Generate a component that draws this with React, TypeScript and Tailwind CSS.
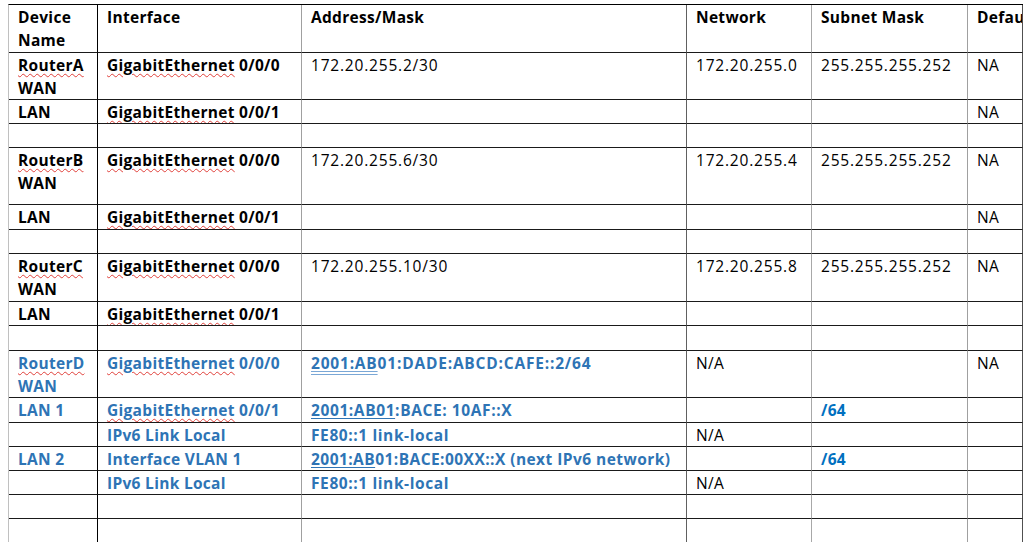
import React from 'react';

type Cell = React.ReactNode;
type Row = { h: string; cells: Cell[] };

const squig = 'underline decoration-wavy decoration-[#e0403a] decoration-1 underline-offset-[2px]';
const blue = 'text-[#2e74b5]';
const num = 'tracking-[0.8px]';
const addr = `${blue} font-bold tracking-[0.6px]`;

function Gig({ port }: { port: string }) {
    return (
        <span className="font-bold">
            <span className={squig}>GigabitEthernet</span> {port}
        </span>
    );
}

function Router({ name }: { name: string }) {
    return (
        <span className="font-bold">
            <span className={squig}>{name}</span>
            <br />
            WAN
        </span>
    );
}

const N = ({ t }: { t: string }) => <span className={num}>{t}</span>;

const blank = ['', '', '', '', '', ''];

const rows: Row[] = [
    {
        h: 'h-[48px]',
        cells: [
            <span className="font-bold">Device Name</span>,
            <span className="font-bold">Interface</span>,
            <span className="font-bold">Address/Mask</span>,
            <span className="font-bold">Network</span>,
            <span className="font-bold">Subnet Mask</span>,
            <span className="font-bold whitespace-nowrap">Default Gateway</span>,
        ],
    },
    { h: 'h-[47px]', cells: [<Router name="RouterA" />, <Gig port="0/0/0" />, <N t="172.20.255.2/30" />, <N t="172.20.255.0" />, <N t="255.255.255.252" />, 'NA'] },
    { h: 'h-[24px]', cells: [<span className="font-bold">LAN</span>, <Gig port="0/0/1" />, '', '', '', 'NA'] },
    { h: 'h-[24px]', cells: blank },
    { h: 'h-[57px]', cells: [<Router name="RouterB" />, <Gig port="0/0/0" />, <N t="172.20.255.6/30" />, <N t="172.20.255.4" />, <N t="255.255.255.252" />, 'NA'] },
    { h: 'h-[25px]', cells: [<span className="font-bold">LAN</span>, <Gig port="0/0/1" />, '', '', '', 'NA'] },
    { h: 'h-[24px]', cells: blank },
    { h: 'h-[48px]', cells: [<Router name="RouterC" />, <Gig port="0/0/0" />, <N t="172.20.255.10/30" />, <N t="172.20.255.8" />, <N t="255.255.255.252" />, 'NA'] },
    { h: 'h-[24px]', cells: [<span className="font-bold">LAN</span>, <Gig port="0/0/1" />, '', '', '', ''] },
    { h: 'h-[25px]', cells: blank },
    {
        h: 'h-[47px]',
        cells: [
            <span className={blue}><Router name="RouterD" /></span>,
            <span className={blue}><Gig port="0/0/0" /></span>,
            <span className={`${blue} font-bold tracking-[0.8px]`}>
                <span className="underline decoration-double decoration-[#7aa7d6] underline-offset-[2px]">2001:AB</span>01:DADE:ABCD:CAFE::2/64
            </span>,
            'N/A',
            '',
            'NA',
        ],
    },
    {
        h: 'h-[25px]',
        cells: [
            <span className={`${blue} font-bold`}>LAN 1</span>,
            <span className={blue}><Gig port="0/0/1" /></span>,
            <span className={addr}>
                <span className="underline decoration-[#2e74b5] underline-offset-[2px]">2001:AB01</span>:BACE: 10AF::X
            </span>,
            '',
            <span className="font-bold text-[#0070c0]">/64</span>,
            '',
        ],
    },
    {
        h: 'h-[24px]',
        cells: ['', <span className={`${blue} font-bold`}>IPv6 Link Local</span>, <span className={addr}>FE80::1 link-local</span>, 'N/A', '', ''],
    },
    {
        h: 'h-[24px]',
        cells: [
            <span className={`${blue} font-bold`}>LAN 2</span>,
            <span className={`${blue} font-bold`}>Interface VLAN 1</span>,
            <span className={`${blue} font-bold tracking-[0.45px]`}>
                <span className="underline decoration-[#2e74b5] underline-offset-[2px]">2001:AB</span>01:BACE:00XX::X (next IPv6 network)
            </span>,
            '',
            <span className="font-bold text-[#0070c0]">/64</span>,
            '',
        ],
    },
    {
        h: 'h-[24px]',
        cells: ['', <span className={`${blue} font-bold`}>IPv6 Link Local</span>, <span className={addr}>FE80::1 link-local</span>, 'N/A', '', ''],
    },
    { h: 'h-[24px]', cells: blank },
    { h: 'h-[25px]', cells: blank },
    { h: 'h-[30px]', cells: blank },
];

// colour of each column's right rule, as the screenshot shows it
const rules = [
    'border-r-[#000]',
    'border-r-[#a0a0a0]',
    'border-r-[#606060]',
    'border-r-[#a8a8a8]',
    'border-r-[#a0a0a0]',
    'border-r-[#505050]',
];

export default function App() {
    return (
        <div className="w-[1024px] h-[542px] overflow-hidden bg-white pt-1 pl-2 font-['Open_Sans','Liberation_Sans',sans-serif] text-[15.5px] leading-[23px] tracking-[0.3px] text-black">
            <div className="w-[1015px] border-l border-t border-l-[#c0c0c0] border-t-black">
                {rows.map((row, i) => (
                    <div key={i} className={`grid grid-cols-[89px_204px_385px_125px_156px_55px] ${row.h}`}>
                        {row.cells.map((cell, j) => (
                            <div key={j} className={`border-b border-r border-b-[#1a1a1a] ${rules[j]} pl-[9px] pt-px overflow-hidden`}>
                                {cell}
                            </div>
                        ))}
                    </div>
                ))}
            </div>
        </div>
    );
}
